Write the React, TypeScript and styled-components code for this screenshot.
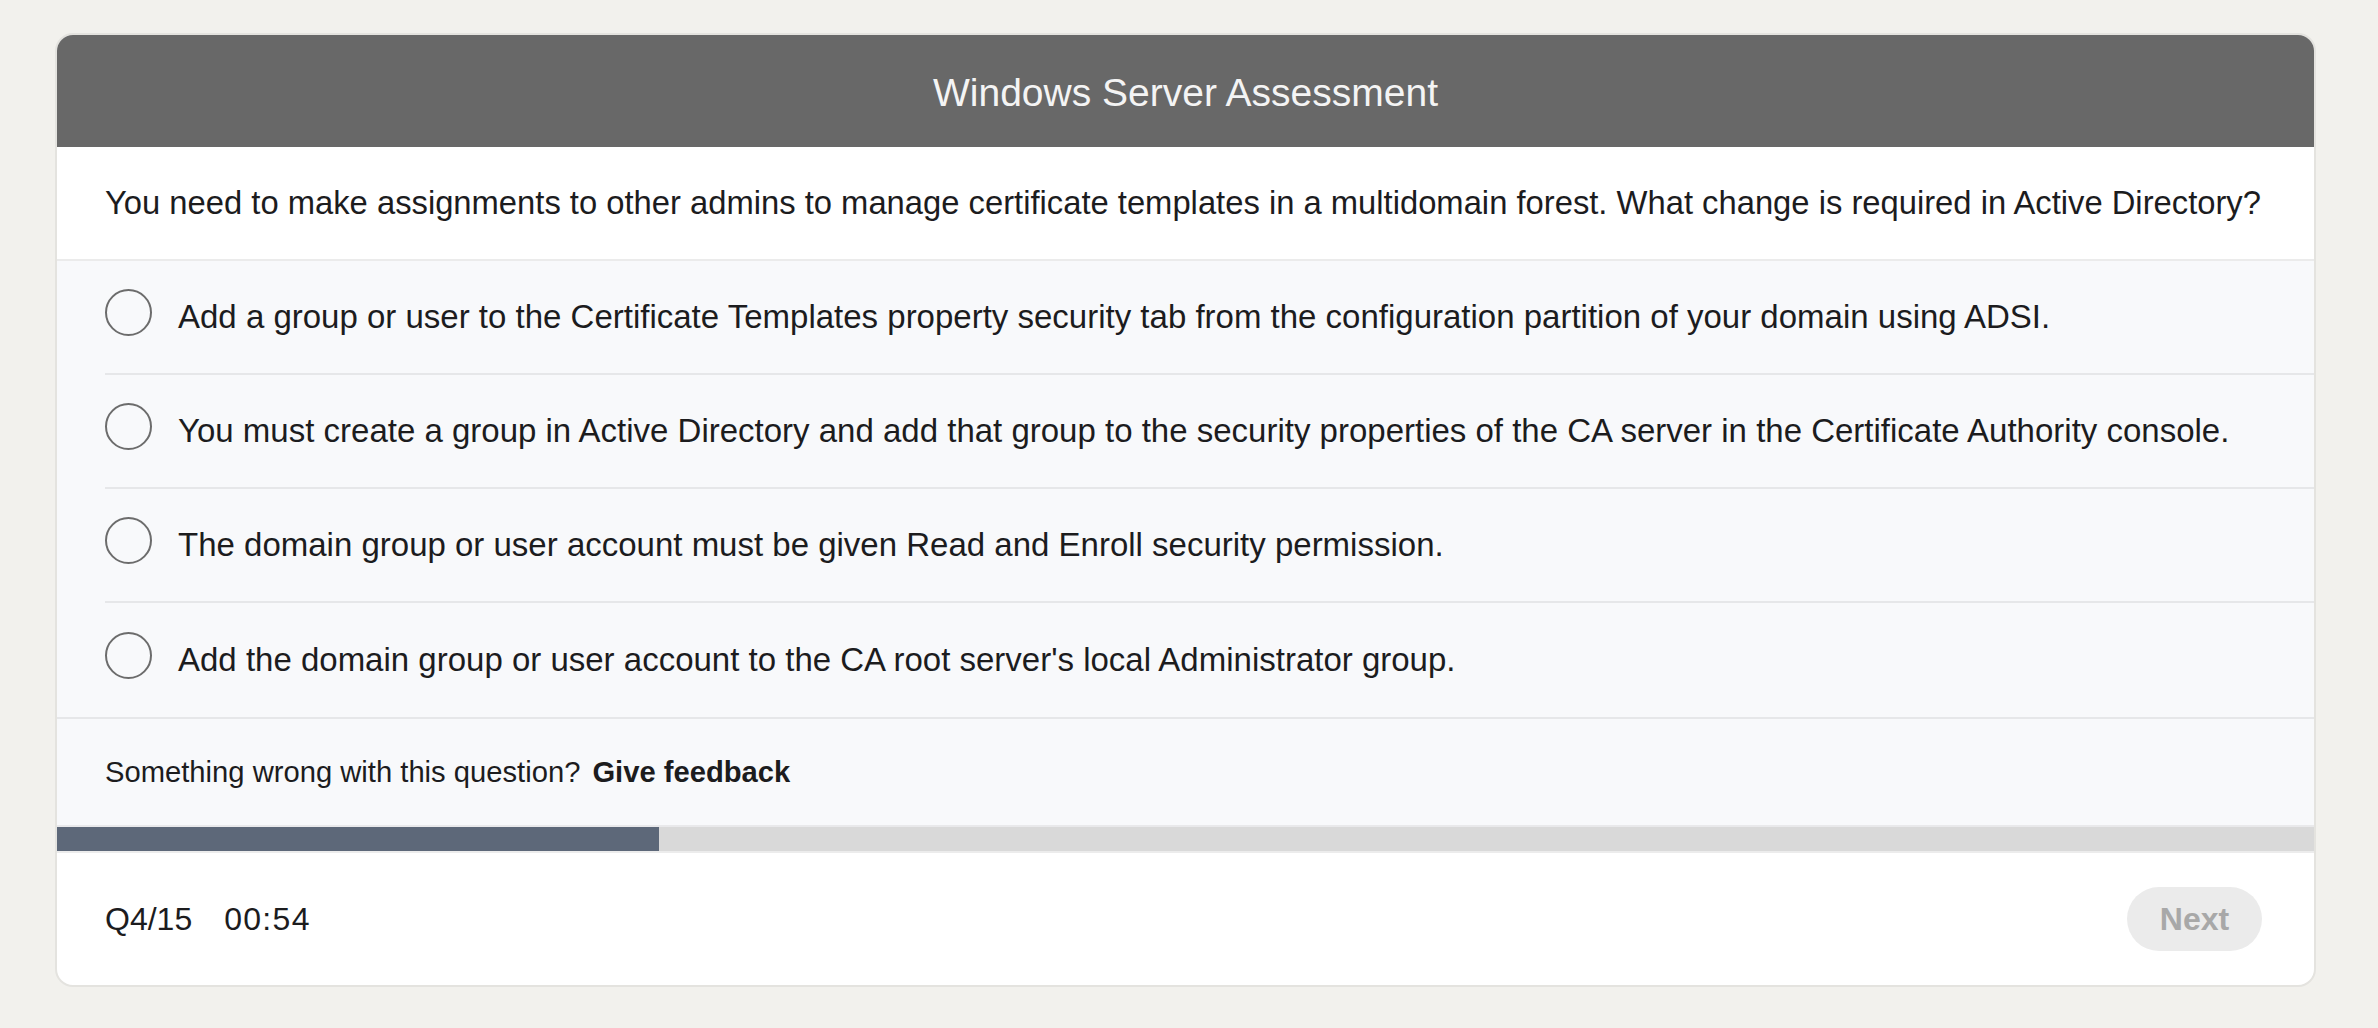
import * as React from "react";
import styled, { createGlobalStyle } from "styled-components";

const GlobalStyle = createGlobalStyle`
  html, body {
    margin: 0;
    padding: 0;
    background: #f2f1ed;
  }
  body {
    font-family: "Liberation Sans", Arial, sans-serif;
    color: #1c1c1e;
  }
`;

const Page = styled.div`
  padding: 33px 0 43px 55px;
`;

const Card = styled.div`
  width: 2257px;
  background: #fff;
  border: 2px solid #e4e3df;
  border-radius: 18px;
  overflow: hidden;
`;

const Header = styled.div`
  height: 112px;
  background: #686868;
  display: flex;
  align-items: center;
  justify-content: center;
`;

const Title = styled.h1`
  margin: 0;
  padding-top: 4px;
  font-size: 39px;
  font-weight: 400;
  color: #f4f4f4;
`;

const Question = styled.div`
  height: 112px;
  border-bottom: 2px solid #ebebeb;
  display: flex;
  align-items: center;
  padding: 0 20px 0 48px;
  font-size: 32.75px;
  white-space: nowrap;
`;

const Options = styled.div`
  background: #f8f9fb;
  padding-left: 48px;
`;

const Option = styled.label`
  height: 112px;
  display: flex;
  align-items: center;
  gap: 26px;
  font-size: 33px;
  cursor: pointer;
  border-bottom: 2px solid #e6e7e9;

  &:last-child {
    height: 114px;
    border-bottom: none;
  }
`;

const Radio = styled.span`
  flex: none;
  width: 43px;
  height: 43px;
  border: 2px solid #6c6c6c;
  border-radius: 50%;
  margin-bottom: 10px;
`;

const Feedback = styled.div`
  height: 106px;
  background: #f8f9fb;
  border-top: 2px solid #e6e7e9;
  display: flex;
  align-items: center;
  gap: 12px;
  padding: 0 48px;
  font-size: 29.2px;
`;

const FeedbackLink = styled.a`
  font-weight: 700;
  color: #1c1c1e;
  text-decoration: none;
`;

const Track = styled.div`
  height: 24px;
  background: #d9d9d9;
  border-top: 2px solid #e9e9eb;
  border-bottom: 2px solid #ececec;
`;

const Fill = styled.div`
  height: 100%;
  background: #5d6879;
`;

const Footer = styled.div`
  height: 132px;
  display: flex;
  align-items: center;
  justify-content: space-between;
  padding: 0 52px 0 48px;
`;

const Meta = styled.div`
  display: flex;
  gap: 32px;
  font-size: 32px;
`;

const Timer = styled.span`
  letter-spacing: 1.3px;
`;

const NextButton = styled.button`
  width: 135px;
  height: 64px;
  border: none;
  border-radius: 32px;
  background: #ebebeb;
  color: #a8a8a8;
  font-family: inherit;
  font-size: 32px;
  font-weight: 700;
`;

const options = [
  "Add a group or user to the Certificate Templates property security tab from the configuration partition of your domain using ADSI.",
  "You must create a group in Active Directory and add that group to the security properties of the CA server in the Certificate Authority console.",
  "The domain group or user account must be given Read and Enroll security permission.",
  "Add the domain group or user account to the CA root server's local Administrator group.",
];

const current = 4;
const total = 15;

export default function App() {
  return (
    <>
      <GlobalStyle />
      <Page>
        <Card>
          <Header>
            <Title>Windows Server Assessment</Title>
          </Header>
          <Question>
            You need to make assignments to other admins to manage certificate templates in a multidomain forest. What change is required in Active Directory?
          </Question>
          <Options>
            {options.map((text) => (
              <Option key={text}>
                <Radio />
                <span>{text}</span>
              </Option>
            ))}
          </Options>
          <Feedback>
            <span>Something wrong with this question?</span>
            <FeedbackLink href="#">Give feedback</FeedbackLink>
          </Feedback>
          <Track>
            <Fill style={{ width: `${(current / total) * 100}%` }} />
          </Track>
          <Footer>
            <Meta>
              <span>
                Q{current}/{total}
              </span>
              <Timer>00:54</Timer>
            </Meta>
            <NextButton disabled>Next</NextButton>
          </Footer>
        </Card>
      </Page>
    </>
  );
}
